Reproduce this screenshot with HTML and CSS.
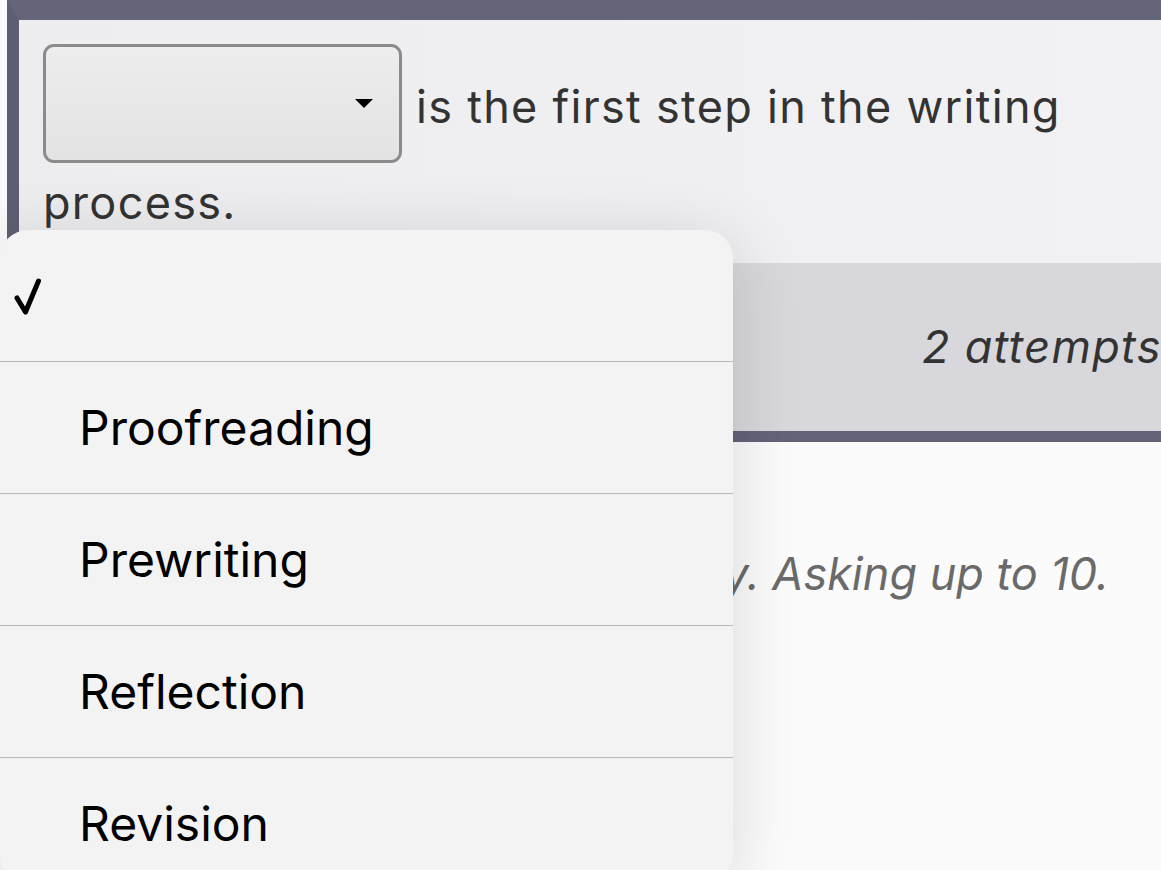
FILE: index.html
```html
<!DOCTYPE html>
<html lang="en">
<head>
    <meta charset="UTF-8">
    <meta name="viewport" content="width=device-width, initial-scale=1.0">
    <title>Quiz question</title>
    <link rel="stylesheet" href="styles.css">
</head>
<body>
    <div class="que">
        <div class="formulation">
            <span class="select-box">
                <svg class="select-arrow" width="18" height="9" viewBox="0 0 18 9"><path d="M0 0h18L9 9z" fill="#000"/></svg>
            </span>
            is the first step in the writing process.
        </div>
        <div class="outcome">
            <span class="attempts">2 attempts</span>
        </div>
    </div>
    <p class="info">Shown randomly. Asking up to 10.</p>

    <!-- native picker opened over the page -->
    <div class="picker">
        <div class="picker-row selected">
            <svg class="check" width="28" height="38" viewBox="0 0 28 38"><path d="M4 21l8.5 14L25.5 4" fill="none" stroke="#000" stroke-width="5" stroke-linecap="round" stroke-linejoin="round"/></svg>
        </div>
        <div class="picker-row">Proofreading</div>
        <div class="picker-row">Prewriting</div>
        <div class="picker-row">Reflection</div>
        <div class="picker-row">Revision</div>
    </div>
</body>
</html>
```

FILE: styles.css
```css
html, body {
    margin: 0;
    height: 100%;
    overflow: hidden;
}
body {
    font-family: Inter, "Noto Sans", sans-serif;
    background-color: #fbfbfc;
    padding-left: 7px;
    color: #333;
}
.que {
    border-top: 20px solid #656579;
    border-left: 12px solid #5f5f73;
}
.formulation {
    background: linear-gradient(90deg, #ededef, #f2f2f4);
    padding: 24px 24px 26px 24px;
    font-size: 45px;
    letter-spacing: 1.3px;
    line-height: 1.5;
}
.select-box {
    display: inline-block;
    position: relative;
    box-sizing: border-box;
    width: 359px;
    height: 119px;
    border: 3px solid #8b8b8b;
    border-radius: 11px;
    background: linear-gradient(#ededed, #e3e3e3);
    vertical-align: -46px;
    margin-bottom: 6px;
}
.select-arrow {
    position: absolute;
    right: 26px;
    top: 52px;
}
.outcome {
    height: 168px;
    background-color: #d8d8dc;
    border-bottom: 11px solid #63637a;
    display: flex;
    align-items: center;
    padding-left: 903px;
    overflow: hidden;
    white-space: nowrap;
}
.attempts {
    font-size: 45px;
    letter-spacing: 1.3px;
    font-style: italic;
    color: #333;
}
.info {
    margin: 104px 0 0 0;
    padding-right: 52px;
    text-align: right;
    white-space: nowrap;
    font-size: 45px;
    font-style: italic;
    color: #6a6a6a;
}
.picker {
    position: absolute;
    left: 0;
    top: 230px;
    width: 733px;
    height: 652px;
    background-color: #f3f3f4;
    border-radius: 28px;
    box-shadow: 0 10px 70px rgba(0, 0, 0, 0.14);
    overflow: hidden;
}
.picker-row {
    height: 131px;
    border-bottom: 1px solid #b9b9bb;
    display: flex;
    align-items: center;
    padding-left: 79px;
    font-size: 48px;
    color: #000;
}
.picker-row.selected {
    padding-left: 13px;
}
.picker-row:last-child {
    border-bottom: none;
}
```
